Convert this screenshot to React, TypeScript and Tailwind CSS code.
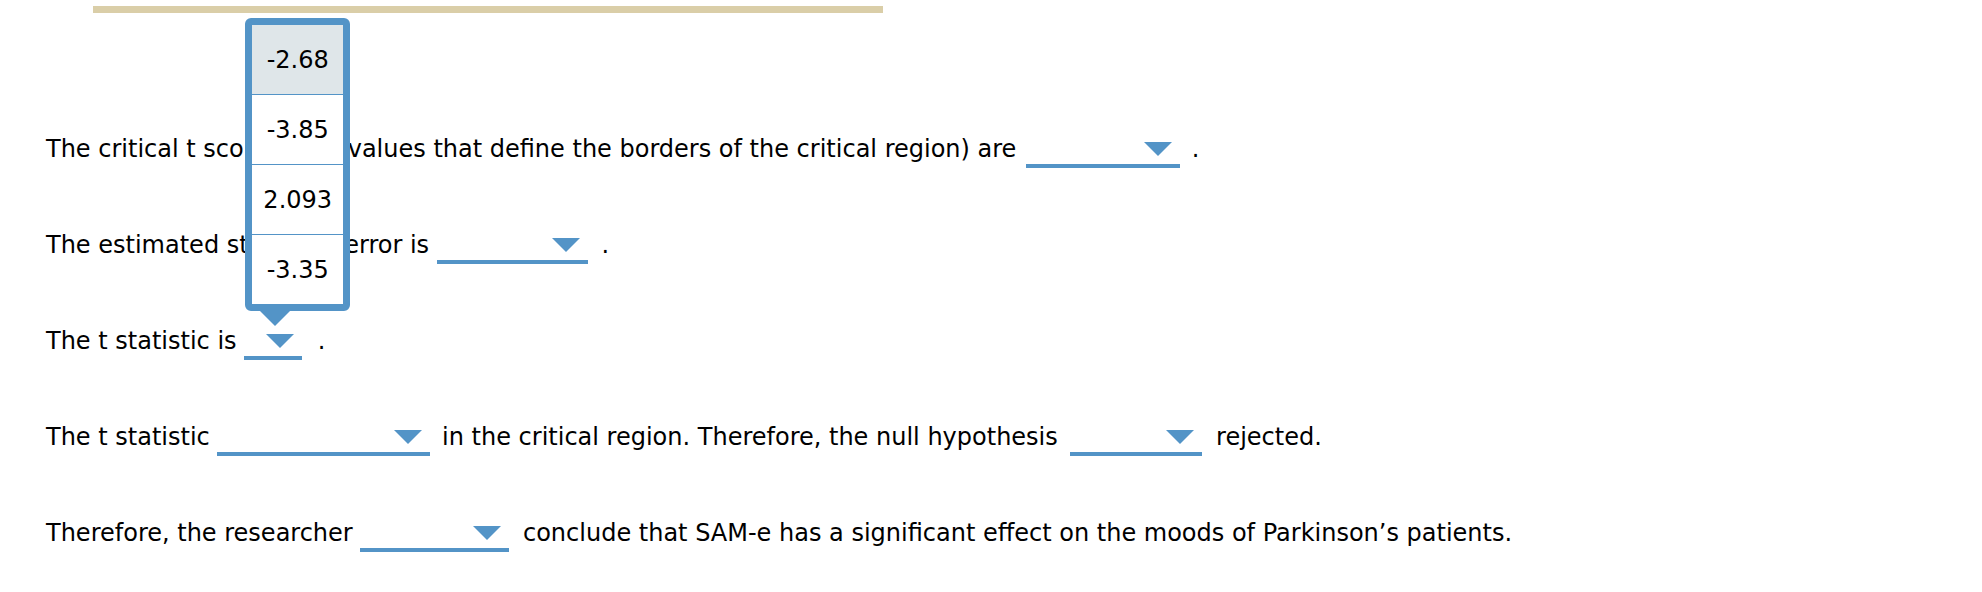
import { useState } from "react";

const BLUE = "#5394c7";

const options = ["-2.68", "-3.85", "2.093", "-3.35"];

function Arrow() {
  return (
    <svg
      className="absolute right-[8px] top-[8px]"
      width="28"
      height="14"
      viewBox="0 0 28 14"
    >
      <polygon points="0,0 28,0 14,14" fill={BLUE} />
    </svg>
  );
}

function Popup() {
  const [active] = useState(0);
  return (
    <div className="absolute left-[1px] bottom-full flex flex-col">
      <div className="w-[105px] h-[293px] rounded-[6px] border-[7px] border-[#5394c7] bg-white flex flex-col divide-y divide-[#5394c7]">
        {options.map((opt, i) => (
          <div
            key={opt}
            className={`flex-1 flex items-center justify-center ${
              i === active ? "bg-[#dfe6e9]" : "bg-white"
            }`}
          >
            {opt}
          </div>
        ))}
      </div>
      {/* pointer down to the open select */}
      <svg className="ml-[15px]" width="30" height="15" viewBox="0 0 30 15">
        <polygon points="0,0 30,0 15,15" fill={BLUE} />
      </svg>
    </div>
  );
}

function Select({ width, open }: { width: string; open?: boolean }) {
  return (
    <span
      className={`relative inline-block align-baseline border-b-4 border-[#5394c7] ${width}`}
    >
      {"\u00a0"}
      <Arrow />
      {open && <Popup />}
    </span>
  );
}

export default function App() {
  return (
    <div
      className="w-full h-[592px] bg-white text-black overflow-hidden"
      style={{ fontFamily: '"DejaVu Sans", Verdana, sans-serif' }}
    >
      {/* header rule */}
      <div className="ml-[93px] mt-[6px] w-[790px] h-[7px] bg-[#dacea8]" />

      <div className="mt-[121px] pl-[46px] flex flex-col gap-[62px] text-[24px] leading-[30px] whitespace-nowrap">
        <div>
          The critical t scores (the
          <span className="ml-[11px]">
            values that define the borders of the critical region) are
          </span>{" "}
          <span className="ml-[2px]">
            <Select width="w-[154px]" />
          </span>{" "}
          <span className="ml-[4px]">.</span>
        </div>
        <div>
          The estimated standard
          <span className="ml-[11px]">error is</span>{" "}
          <Select width="w-[151px]" /> <span className="ml-[6px]">.</span>
        </div>
        <div>
          The t statistic is <Select width="w-[58px]" open />{" "}
          <span className="ml-[8px]">.</span>
        </div>
        <div>
          The t statistic <Select width="w-[213px]" />{" "}
          <span className="ml-[4px]">
            in the critical region. Therefore, the null hypothesis
          </span>{" "}
          <span className="ml-[5px]">
            <Select width="w-[132px]" />
          </span>{" "}
          <span className="ml-[6px]">rejected.</span>
        </div>
        <div>
          Therefore, the researcher <Select width="w-[149px]" />{" "}
          <span className="ml-[6px]">
            conclude that SAM-e has a significant effect on the moods of
            Parkinson’s patients.
          </span>
        </div>
      </div>
    </div>
  );
}
